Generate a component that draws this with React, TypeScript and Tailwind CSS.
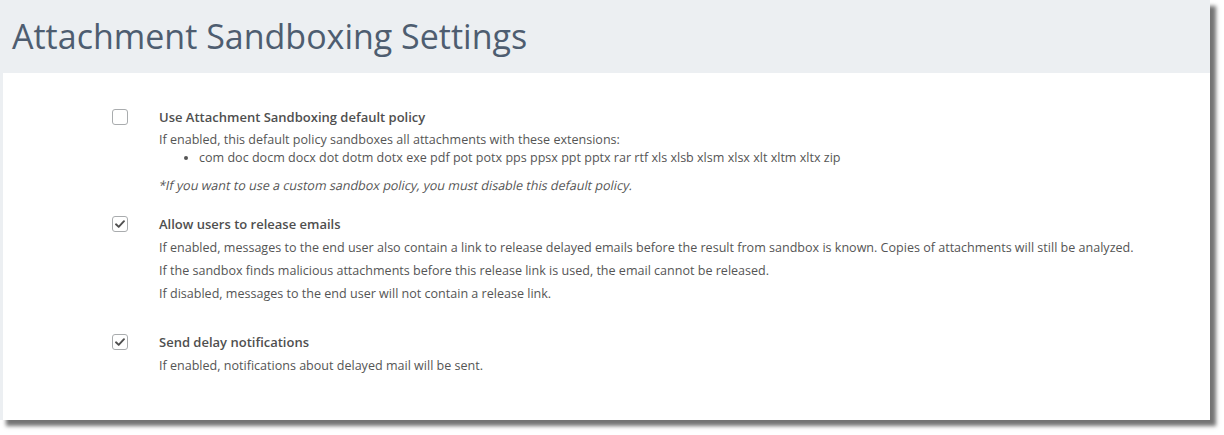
import React from 'react';

const font = { fontFamily: '"Open Sans", "Liberation Sans", sans-serif' };

const Checkbox: React.FC<{ checked?: boolean }> = ({ checked }) => (
    <div className="w-[16px] h-[16px] rounded-[3px] border border-[#a9acae] bg-white flex items-center justify-center">
        {checked && (
            <svg width="12" height="12" viewBox="0 0 12 12" fill="none">
                <path d="M2 6.3 L4.7 8.9 L10 3.2" stroke="#505050" strokeWidth="1.9" strokeLinecap="round" strokeLinejoin="round" />
            </svg>
        )}
    </div>
);

const App: React.FC = () => {
    return (
        <div className="w-[1224px] h-[435px] bg-white" style={font}>
            <div className="w-[1210px] h-[420px] bg-white border-l-[3px] border-[#eceff2] shadow-[6px_6px_4px_rgba(0,0,0,0.55)] flex flex-col">
                <div className="h-[73px] bg-[#eceff2] -ml-[3px] pl-[12px] flex items-center">
                    <h1 className="text-[34px] leading-none text-[#4e5d70] pb-[2px] font-normal">Attachment Sandboxing Settings</h1>
                </div>

                <div className="pt-[35px] pl-[109px] text-[#555555] text-[12.56px]">
                    {/* default policy */}
                    <div className="flex">
                        <div className="w-[47px] pt-[1px]">
                            <Checkbox />
                        </div>
                        <div>
                            <p className="text-[13px] leading-[18px] font-semibold text-[#4f4f4f]">Use Attachment Sandboxing default policy</p>
                            <p className="mt-[5px] leading-[18px]">If enabled, this default policy sandboxes all attachments with these extensions:</p>
                            <ul className="list-disc pl-[40px] leading-[18px]">
                                <li>com doc docm docx dot dotm dotx exe pdf pot potx pps ppsx ppt pptx rar rtf xls xlsb xlsm xlsx xlt xltm xltx zip</li>
                            </ul>
                            <p className="mt-[10px] leading-[18px]">
                                <span className="inline-block -skew-x-12">*If you want to use a custom sandbox policy, you must disable this default policy.</span>
                            </p>
                        </div>
                    </div>

                    {/* release emails */}
                    <div className="flex mt-[20px]">
                        <div className="w-[47px] pt-[1px]">
                            <Checkbox checked />
                        </div>
                        <div>
                            <p className="text-[13px] leading-[18px] font-semibold text-[#4f4f4f]">Allow users to release emails</p>
                            <div className="mt-[3px] leading-[23px]">
                                <p>If enabled, messages to the end user also contain a link to release delayed emails before the result from sandbox is known. Copies of attachments will still be analyzed.</p>
                                <p>If the sandbox finds malicious attachments before this release link is used, the email cannot be released.</p>
                                <p>If disabled, messages to the end user will not contain a release link.</p>
                            </div>
                        </div>
                    </div>

                    {/* delay notifications */}
                    <div className="flex mt-[28px]">
                        <div className="w-[47px] pt-[1px]">
                            <Checkbox checked />
                        </div>
                        <div>
                            <p className="text-[13px] leading-[18px] font-semibold text-[#4f4f4f]">Send delay notifications</p>
                            <p className="mt-[6px] leading-[18px]">If enabled, notifications about delayed mail will be sent.</p>
                        </div>
                    </div>
                </div>
            </div>
        </div>
    );
};

export default App;
